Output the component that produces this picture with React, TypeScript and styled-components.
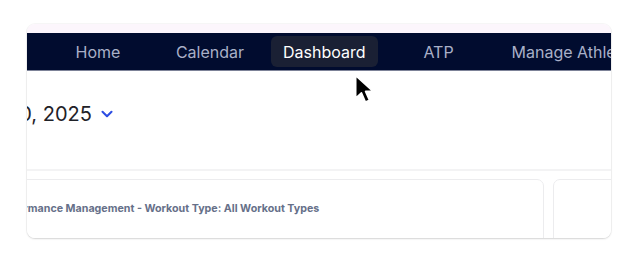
import styled, { createGlobalStyle } from 'styled-components'
import { ChevronDown } from 'lucide-react'

const GlobalStyle = createGlobalStyle`
	html, body {
		margin: 0;
		padding: 0;
		background: #ffffff;
		font-family: Inter, 'Liberation Sans', sans-serif;
	}
`

const Page = styled.div`
	position: relative;
	width: 640px;
	height: 257px;
	padding: 24px 0 0 27px;
	box-sizing: border-box;
`

const Frame = styled.div`
	width: 584px;
	height: 214px;
	overflow: hidden;
	border-radius: 8px;
	background: #ffffff;
	box-shadow: 0 1px 2px rgba(0, 0, 0, 0.14), 0 0 0 1px rgba(0, 0, 0, 0.03);
`

const TopStrip = styled.div`
	height: 9px;
	background: #fcf6fc;
`

const Nav = styled.nav`
	height: 37px;
	display: flex;
	align-items: center;
	gap: 10px;
	padding-left: 20px;
	background: #010c2f;
	border-bottom: 1px solid #7d8398;
	white-space: nowrap;
`

const NavItem = styled.div<{ active?: boolean }>`
	flex: 0 0 auto;
	min-width: 102px;
	box-sizing: border-box;
	height: 31px;
	padding: 0 12px;
	display: flex;
	align-items: center;
	justify-content: center;
	border-radius: 6px;
	font-size: 16px;
	color: ${({ active }) => (active ? '#ffffff' : '#a9b0c8')};
	background: ${({ active }) => (active ? '#1a2034' : 'transparent')};
`

const Header = styled.div`
	height: 100px;
	box-sizing: border-box;
	padding-top: 29px;
	border-bottom: 2px solid #f3f3f4;
`

const DateRow = styled.div`
	display: flex;
	align-items: center;
	gap: 6px;
	margin-left: -56px;
	white-space: nowrap;
`

const DateText = styled.span`
	font-size: 20px;
	line-height: 28px;
	color: #1f2228;
`

const CardsRow = styled.div`
	display: flex;
	gap: 9px;
	padding-top: 8px;
	margin-left: -40px;
`

const Card = styled.div<{ width: number }>`
	flex: 0 0 ${({ width }) => width}px;
	height: 80px;
	box-sizing: border-box;
	padding: 22px 7px 0;
	border: 1px solid #ececee;
	border-radius: 7px;
	background: #ffffff;
`

const CardTitle = styled.div`
	font-size: 10.7px;
	line-height: 14px;
	font-weight: 700;
	color: #667089;
	white-space: nowrap;
`

const Cursor = styled.svg`
	position: absolute;
	left: 353px;
	top: 74px;
`

const navItems = ['Home', 'Calendar', 'Dashboard', 'ATP', 'Manage Athletes']

export default function App() {
	return (
		<Page>
			<GlobalStyle />
			<Frame>
				<TopStrip />
				<Nav>
					{navItems.map((item) => (
						<NavItem key={item} active={item === 'Dashboard'}>
							{item}
						</NavItem>
					))}
				</Nav>
				<Header>
					<DateRow>
						<DateText>Jan 10, 2025</DateText>
						<ChevronDown size={18} strokeWidth={2.8} color='#2f4fe3' />
					</DateRow>
				</Header>
				<CardsRow>
					<Card width={557}>
						<CardTitle>
							Performance Management - Workout Type: All Workout Types
						</CardTitle>
					</Card>
					<Card width={200} />
				</CardsRow>
			</Frame>
			<Cursor width='26' height='32' viewBox='0 0 22 28'>
				<path
					d='M2 1.5 L2 21 L7 16.5 L10.5 24.5 L14 23 L10.6 15.2 L17.2 15.2 Z'
					fill='#000000'
					stroke='#ffffff'
					strokeWidth='1.4'
					strokeLinejoin='round'
				/>
			</Cursor>
		</Page>
	)
}
